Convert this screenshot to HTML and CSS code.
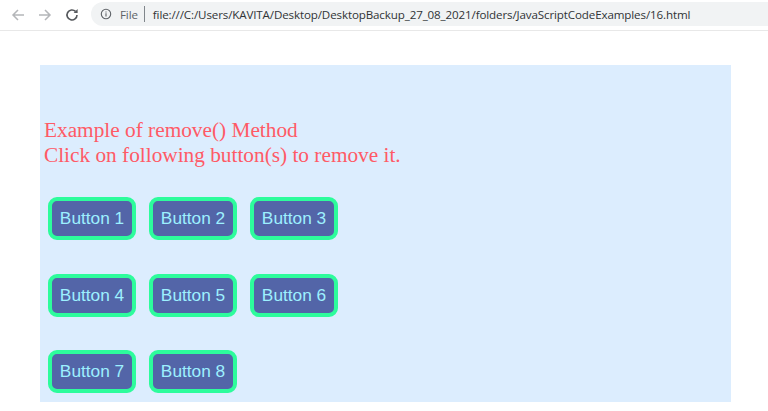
FILE: index.html
```html
<!DOCTYPE html>
<html lang="en">
<head>
<meta charset="UTF-8">
<title>Example of remove() Method</title>
<link rel="stylesheet" href="styles.css">
</head>
<body>
<div class="toolbar">
  <svg class="nav" width="16" height="16" viewBox="0 0 16 16"><path d="M14 8H3M8 3L3 8l5 5" class="dim"/></svg>
  <svg class="nav" width="16" height="16" viewBox="0 0 16 16"><path d="M2 8h11M8 3l5 5-5 5" class="dim"/></svg>
  <svg class="nav" width="16" height="16" viewBox="0 0 16 16"><path d="M13 8a5 5 0 1 1-1.5-3.6" class="dark"/><path d="M13.6 2v4h-4z" class="fill"/></svg>
  <div class="address">
    <svg width="12" height="12" viewBox="0 0 12 12"><circle cx="6" cy="6" r="4.7" class="info"/><path d="M6 5.3v3.2M6 3.4v1" class="info"/></svg>
    <span class="scheme">File</span>
    <span class="sep"></span>
    <span class="url">file:///C:/Users/KAVITA/Desktop/DesktopBackup_27_08_2021/folders/JavaScriptCodeExamples/16.html</span>
  </div>
</div>

<div class="panel">
  <p class="heading">Example of remove() Method<br>Click on following button(s) to remove it.</p>
  <div class="buttons">
    <button>Button 1</button>
    <button>Button 2</button>
    <button>Button 3</button>
    <button>Button 4</button>
    <button>Button 5</button>
    <button>Button 6</button>
    <button>Button 7</button>
    <button>Button 8</button>
  </div>
</div>

<script>
// clicked button goes away
document.querySelectorAll('button').forEach(b=>{
  b.addEventListener('click',()=>b.remove());
});
</script>
</body>
</html>
```

FILE: styles.css
```css
html,body{margin:0;padding:0;background:#fff;}
body{width:768px;height:411px;overflow:hidden;}

.toolbar{height:31px;box-sizing:border-box;border-bottom:1px solid #e8e8e8;display:flex;align-items:center;padding:0 0 0 10px;}
.nav{margin-right:11px;flex:none;}
.nav path{fill:none;stroke-width:1.5;}
.nav .dim{stroke:#b4b6b9;}
.nav .dark{stroke:#55585c;stroke-width:1.6;}
.nav .fill{fill:#55585c;stroke:none;}

.address{flex:1;height:24px;background:#f1f3f4;border-radius:12px 0 0 12px;display:flex;align-items:center;padding-left:9px;box-sizing:border-box;font-family:"Open Sans",sans-serif;font-size:11.6px;letter-spacing:-.13px;white-space:nowrap;margin-top:-2px;}
.info{fill:none;stroke:#5f6368;stroke-width:1.1;}
.scheme{color:#5f6368;margin-left:8px;}
.sep{width:1px;height:16px;background:#80868b;margin:0 8px 0 6px;}
.url{color:#303336;}

.panel{margin:34px 0 0 40px;width:691px;height:337px;background:#dcedfe;box-sizing:border-box;padding:53px 0 0 4px;}
.heading{margin:0;font-family:"Liberation Serif",serif;font-size:21.3px;line-height:24.5px;color:#ff5a66;}

.buttons{display:flex;flex-wrap:wrap;width:300px;column-gap:13.5px;row-gap:33.5px;margin:30px 0 0 4.3px;}
button{width:87.5px;height:43px;box-sizing:border-box;padding:0;background:#5365a8;border:4px solid #2dfc9c;border-radius:9px;color:#9df0ff;font-family:"Liberation Sans",sans-serif;font-size:17.3px;}
```
